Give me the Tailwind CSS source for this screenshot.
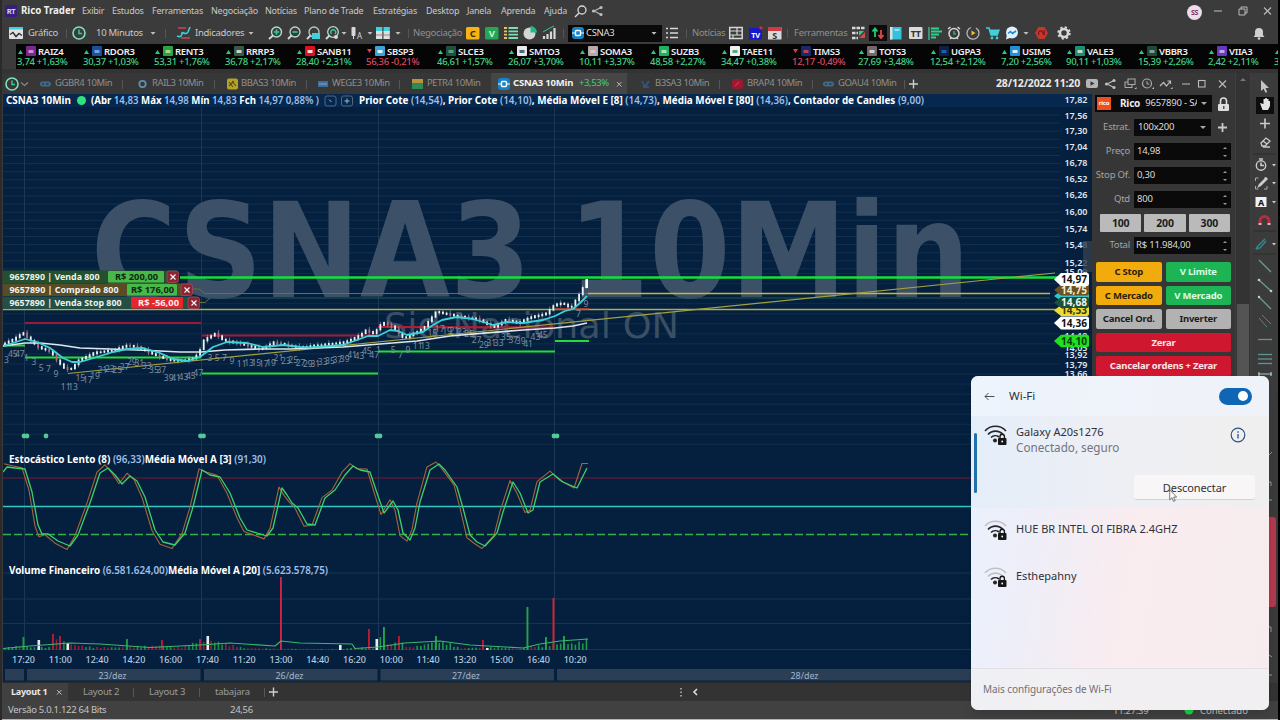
<!DOCTYPE html>
<html lang="pt-BR">

<head>
    <meta charset="UTF-8">
    <meta name="viewport" content="width=device-width, initial-scale=1.0">
    <title>Rico Trader</title>
    <script src="https://cdn.jsdelivr.net/npm/@tailwindcss/browser@4"></script>
</head>

<body class="bg-[#3b3b3b] w-[1280px] h-[720px] overflow-hidden relative font-['Noto_Sans','Open_Sans',sans-serif] text-[#c9c9c9]">
    <div class="flex flex-col h-[720px] border-l-2 border-r-2 border-r-black border-l-[#2a2a2a]">
        <!-- Menu -->
        <nav id="menu" class="flex h-[22px] shrink-0 text-[9px] tracking-[-0.25px]"></nav>

        <!-- Toolbar -->
        <div id="toolbar" class="flex h-[22px] shrink-0 text-[9.5px] tracking-[-0.3px]"></div>

        <!-- Ticker -->
        <div class="h-[25px] shrink-0 bg-[#050505] ml-[14px] overflow-hidden">
            <div id="ticker" class="flex h-full"></div>
        </div>

        <div class="flex h-[614px] shrink-0 border-t-4 border-[#333333]">
            <div class="flex flex-col w-[1233px] shrink-0">
                <!-- Chart tabs -->
                <div id="tabs" class="flex h-[21px] shrink-0 text-[9.5px] tracking-[-0.4px] text-[#8f8f8f] bg-[#373737]"></div>

                <div class="flex h-[589px] shrink-0">
                    <svg id="chart" class="ml-px shrink-0" width="1089" height="589" viewBox="3 94 1089 589"></svg>

                    <!-- Boleta -->
                    <div class="w-[143px] bg-[#363636] pl-[3px] pr-[4px] pt-px text-[9.5px] tracking-[-0.2px]">
                        <div class="flex items-center h-[17px]">
                            <div class="flex items-center w-[117px] h-[17px] bg-[#0a0a0a] px-[2px]">
                                <span class="w-[14px] h-[13px] bg-[#f04e1e] text-white text-[6px] font-bold leading-[13px] text-center">rico</span>
                                <b class="ml-[9px] text-[10px] text-[#eee]">Rico</b>
                                <span class="ml-[5px] w-[52px] overflow-hidden whitespace-nowrap text-[#ddd]">9657890 - SA</span>
                                <span class="ml-auto mr-[3px] border-x-3 border-x-transparent border-t-3 border-t-[#aaa]"></span>
                            </div>
                            <svg class="ml-[5px]" width="14" height="14" viewBox="0 0 14 14"><path d="M3.5 7V4a3 3 0 0 1 6 0v3" fill="none" stroke="#ddd" stroke-width="1.6" /><rect x="1" y="7" width="11" height="7" rx="1" fill="#ddd" /><rect x="6" y="9" width="1.5" height="3" fill="#555" /></svg>
                        </div>
                        <div class="flex items-center h-[17px] mt-[7px]">
                            <span class="w-[35px] mr-[4px] text-right text-[#a5a5a5]">Estrat.</span>
                            <span class="flex items-center w-[77px] h-[17px] bg-[#0a0a0a] pl-[4px] pr-[5px] text-[#ddd]">100x200<span class="ml-auto border-x-3 border-x-transparent border-t-3 border-t-[#aaa]"></span></span>
                            <svg class="ml-[7px]" width="9" height="9" viewBox="0 0 9 9"><path d="M0 4.5h9M4.5 0v9" stroke="#c8c8c8" stroke-width="1.8" /></svg>
                        </div>
                        <div id="fields"></div>
                        <div class="grid grid-cols-3 gap-[3px] w-[130px] h-[18px] mt-[6px] ml-[5px] text-[10.5px] font-bold text-[#1c1c1c] text-center leading-[18px]">
                            <span class="bg-[#bababa] rounded-[1px]">100</span><span class="bg-[#bababa] rounded-[1px]">200</span><span class="bg-[#bababa] rounded-[1px]">300</span>
                        </div>
                        <div class="flex items-center h-[17px] mt-[5px]">
                            <span class="w-[35px] mr-[4px] text-right text-[#a5a5a5]">Total</span>
                            <span class="flex items-center w-[97px] h-[17px] bg-[#0a0a0a] pl-[2px] pr-[3px] text-[#ddd]">R$ 11.984,00<svg class="ml-auto" width="6" height="12" viewBox="0 0 6 12"><path d="M1 3l2-2 2 2zM1 9l2 2 2-2z" fill="#999" /></svg></span>
                        </div>
                        <div class="grid grid-cols-2 gap-x-[4px] gap-y-[4px] w-[135px] mt-[8px] ml-px text-[9.5px] font-bold text-center leading-[19px]">
                            <span class="h-[19.5px] bg-[#f2ab0c] text-[#2b2108] rounded-[2px]">C Stop</span>
                            <span class="h-[19.5px] bg-[#1db455] text-[#d9ffe4] rounded-[2px]">V Limite</span>
                            <span class="h-[19.5px] bg-[#f2ab0c] text-[#2b2108] rounded-[2px]">C Mercado</span>
                            <span class="h-[19.5px] bg-[#1db455] text-[#d9ffe4] rounded-[2px]">V Mercado</span>
                            <span class="h-[19.5px] bg-[#b2b2b2] text-[#1c1c1c] rounded-[2px]">Cancel Ord.</span>
                            <span class="h-[19.5px] bg-[#b2b2b2] text-[#1c1c1c] rounded-[2px]">Inverter</span>
                            <span class="h-[19.5px] col-span-2 bg-[#cf1830] text-[#ffe5e8] rounded-[2px]">Zerar</span>
                            <span class="h-[19.5px] col-span-2 bg-[#cf1830] text-[#ffe5e8] rounded-[2px]">Cancelar ordens + Zerar</span>
                        </div>
                    </div>
                </div>
            </div>
            <!-- Scroll + tools -->
            <div class="w-[16px] shrink-0 bg-[#333] border-x border-[#3f3f3f] flex flex-col items-center">
                <span class="mt-[5px] border-x-3 border-x-transparent border-b-3 border-b-[#777]"></span>
                <div class="mt-[223px] w-[12px] h-[340px] bg-[#545454]"></div>
            </div>
            <svg id="tools" class="shrink-0" width="27" height="610" viewBox="1251 73 27 610"></svg>
        </div>

        <!-- Layout tabs -->
        <div id="layouts" class="flex h-[18px] shrink-0 bg-[#333333] text-[9.5px] tracking-[-0.25px] text-[#9c9c9c]"></div>
        <!-- Status -->
        <div id="status" class="flex h-[18px] shrink-0 bg-[#414141] text-[9.5px] tracking-[-0.3px] text-[#c4c4c4]"></div>
        <div class="h-px shrink-0 bg-[#b5b5b5]"></div>
    </div>

    <!-- Wi-Fi flyout -->
    <div class="absolute left-[971px] top-[376px] w-[298px] h-[334px] rounded-[7px] overflow-hidden flex flex-col text-[#303036] text-[11px] shadow-lg bg-linear-[100deg,#e9f3ff_0%,#eeeef8_25%,#faecef_55%,#f6ecee_100%]">
        <div class="flex items-center h-[40px] px-[13px] bg-[#eef4fb]/80">
            <svg width="11" height="9" viewBox="0 0 11 9"><path d="M10.5 4.5H1M4.5 1L1 4.5L4.5 8" fill="none" stroke="#4c4c52" stroke-width="1" /></svg>
            <span class="ml-[14px] text-[11.5px]">Wi-Fi</span>
            <span class="ml-auto mr-[4px] w-[33px] h-[17px] rounded-full bg-[#0f66b4] flex items-center justify-end pr-[4px]"><span class="w-[10px] h-[10px] rounded-full bg-white"></span></span>
        </div>
        <div class="h-[92px] relative bg-linear-to-r from-[#e4eefa] via-[#eeeff4] to-[#f0efef]">
            <span class="absolute left-[3px] top-[17px] w-[3px] h-[60px] rounded-full bg-[#2270aa]"></span>
            <div class="flex h-[39px] pl-[13px] pt-[8px]">
                <svg class="wifi" data-bars="3" width="24" height="22" viewBox="0 0 24 22"></svg>
                <div class="ml-[8px]">
                    <div class="leading-[15px] text-[11px]">Galaxy A20s1276</div>
                    <div class="leading-[17px] text-[11.7px] text-[#74747c]">Conectado, seguro</div>
                </div>
                <svg class="ml-auto mr-[23px] mt-[3px]" width="16" height="16" viewBox="0 0 16 16"><circle cx="8" cy="8" r="6.8" fill="none" stroke="#2f5183" stroke-width="1.2" /><path d="M8 7v4.5M8 4.3v1.4" stroke="#2f5183" stroke-width="1.3" /></svg>
            </div>
            <div class="ml-[163px] mt-[20px] w-[121px] h-[25px] rounded-[3px] bg-[#f9f6f7] border-b border-[#d5d0d2] text-center leading-[25px] text-[11px] tracking-[-0.1px]">Desconectar</div>
            <svg class="absolute left-[198px] top-[73px]" width="9" height="14" viewBox="0 0 9 14"><path d="M.7.7v10l2.3-2 1.5 3.6 1.7-.7-1.6-3.5h3z" fill="#fff" stroke="#555" stroke-width=".8" /></svg>
        </div>
        <div class="flex items-center h-[43px] pl-[13px]">
            <svg class="wifi" data-bars="2" width="24" height="22" viewBox="0 0 24 22"></svg>
            <span class="ml-[8px] text-[11px]">HUE BR INTEL OI FIBRA 2.4GHZ</span>
        </div>
        <div class="flex items-center h-[51px] pl-[13px]">
            <svg class="wifi" data-bars="1" width="24" height="22" viewBox="0 0 24 22"></svg>
            <span class="ml-[8px] text-[11px]">Esthepahny</span>
        </div>
        <div class="mt-auto h-[42px] flex items-center pl-[12px] border-t border-[#e2e0e6] bg-[#f0f0f3]/80 text-[10px] tracking-[-0.08px] text-[#707078]">Mais configurações de Wi-Fi</div>
    </div>

    <script>
        // ---------- icons (14x14) ----------
        const G = '#2fd08c', W = '#d8d8d8', C = '#3fd0dc';
        const icons = {
            rt: `<rect width="12" height="12" x="1" y="1" fill="#32207c"/><text x="7" y="10" font-size="7.5" font-weight="bold" text-anchor="middle" fill="#d9cff5">RT</text>`,
            search: `<circle cx="8" cy="6" r="4" fill="none" stroke="${W}" stroke-width="1.3"/><path d="M5 9l-4 4" stroke="${W}" stroke-width="1.5"/>`,
            share: `<path d="M11 3.5L4 7l7 3.5" fill="none" stroke="#bdbdbd" stroke-width="1.1"/><circle cx="11" cy="3.5" r="1.6" fill="#bdbdbd"/><circle cx="3.5" cy="7" r="1.6" fill="#bdbdbd"/><circle cx="11" cy="10.500" r="1.6" fill="#bdbdbd"/>`,
            chart: `<rect y="1" width="14" height="12" rx="1" fill="#e2e2e2"/><rect y="1" width="14" height="2.5" fill="${C}"/><path d="M1 8.500l3-2 3 4 3-3 3 2" fill="none" stroke="#333" stroke-width="1.5"/>`,
            clock: `<circle cx="7" cy="7" r="6" fill="none" stroke="#7fe0bc" stroke-width="1.6"/><path d="M7 3.5V7.5H10" fill="none" stroke="${G}" stroke-width="1.5"/>`,
            caret: `<path d="M3.5 6h5L6 8.8z" fill="#c0c0c0"/>`,
            ind: `<path d="M1 2h8M4 12h9" stroke="#c94a4a" stroke-width="1.5"/><path d="M0 10c4 2 5-1 5-3s4 3 6-1l2-5" fill="none" stroke="${C}" stroke-width="1.6"/>`,
            zin: `<circle cx="8.5" cy="6" r="5" fill="none" stroke="#b9d9d0" stroke-width="1.4"/><path d="M5 9.5L1 13" stroke="${W}" stroke-width="1.8"/><path d="M5.8 6h5.4M8.5 3.3v5.4" stroke="${G}" stroke-width="1.6"/>`,
            zout: `<circle cx="8" cy="6" r="5" fill="none" stroke="#b9d9d0" stroke-width="1.3"/><path d="M4.5 9.5L1 13" stroke="${W}" stroke-width="1.8"/><path d="M5.5 6h5" stroke="${G}" stroke-width="1.6"/>`,
            zsel: `<circle cx="8" cy="6" r="5" fill="none" stroke="#b9c9c9" stroke-width="1.3"/><path d="M4.5 9.5L1 13" stroke="${W}" stroke-width="1.8"/><rect x="6" y="7" width="8" height="6" fill="${C}"/>`,
            zper: `<circle cx="8" cy="6" r="5.3" fill="none" stroke="#b9d9d0" stroke-width="1.3"/><path d="M4.5 9.5L1 13" stroke="${W}" stroke-width="1.8"/><path d="M6.500 8a2.500 2.500 0 1 1 3.500 0" fill="none" stroke="${G}" stroke-width="1.4"/><circle cx="11" cy="11" r="2" fill="${W}"/>`,
            ta: `<rect x="1.5" y="1" width="4" height="9" rx="1" fill="${W}"/><path d="M3.5 10v3" stroke="${W}"/><text x="7" y="13" font-size="8" fill="${W}">A</text>`,
            grid: `<rect y="1" width="6.3" height="5" fill="${C}"/><rect x="7.5" y="1" width="6.3" height="5" fill="${C}"/><rect y="5" width="6.3" height="8" fill="#dedede"/><rect x="7.5" y="5" width="6.3" height="8" fill="#dedede"/><path d="M0 9h14" stroke="#777" stroke-width=".8"/>`,
            c: `<rect y="1" width="13.5" height="12.5" rx="1.5" fill="#f5b414"/><text x="6.7" y="11" font-size="9.5" font-weight="bold" text-anchor="middle" fill="#40300a">C</text>`,
            v: `<rect y="1" width="13.5" height="12.5" rx="1.5" fill="#22a855"/><text x="6.7" y="11" font-size="9.5" font-weight="bold" text-anchor="middle" fill="#c4f5d4">V</text>`,
            rows: `<path d="M0 2h3M0 5.3h3M0 8.6h3M0 12h3" stroke="#e0c860" stroke-width="1.8"/><path d="M4.5 2H14M4.5 5.3H14M4.5 8.6H14M4.5 12H14" stroke="#7fdcb0" stroke-width="1.8"/>`,
            pie: `<circle cx="6.5" cy="7.5" r="6" fill="#d5d5d5"/><path d="M7.5 6.5V0a6.5 6.5 0 0 1 6.5 6.5z" fill="#22b88c"/>`,
            bars: `<path d="M2 13V10M5.5 13V8M9 13V5.5M12.5 13V2" stroke="${W}" stroke-width="2.2"/><path d="M1 6l5-3 6-3" stroke="${G}" fill="none"/>`,
            csna: `<rect y="1" width="12" height="12" rx="3" fill="#1583c7"/><rect x="3.5" y="4.5" width="5" height="5" rx="1" fill="none" stroke="#fff" stroke-width="1.4"/><path d="M0 7h3.5M8.5 7H12" stroke="#fff"/>`,
            list: `<path d="M1 2.5h2M1 7h2M1 11.5h2M5 2.5h8M5 7h8M5 11.5h8" stroke="${W}" stroke-width="1.6"/>`,
            news: `<rect x=".7" y="1.5" width="12.5" height="11" fill="none" stroke="${W}" stroke-width="1.5"/><path d="M1 5h12M1 9h12M8 1v8M4 9v3" stroke="${W}" stroke-width="1.2"/>`,
            tv: `<rect y="2" width="13" height="11.5" fill="#1818c8"/><text x="6.5" y="11.5" font-size="7.5" font-weight="bold" text-anchor="middle" fill="#fff">TV</text><circle cx="12" cy="2" r="1.7" fill="#d02c34"/>`,
            usd: `<rect y="1" width="13.5" height="12.5" fill="#d8d8d8"/><rect y="1" width="13.5" height="4" fill="#cf3a44"/><text x="6.7" y="12.5" font-size="9" font-weight="bold" text-anchor="middle" fill="#333">S</text>`,
            table: `<path d="M0 2h13M0 7h6M0 12h6" stroke="${W}" stroke-width="2.6" stroke-dasharray="3.5 1"/><path d="M7 12l6-6v6z" fill="#d44"/><path d="M7 5h5l-5 5z" fill="${G}"/>`,
            updn: `<rect x="-2" y="-1" width="18" height="16" fill="#0c0c0c"/><path d="M4 11V3M1.5 5.5L4 2.5l2.5 3" fill="none" stroke="#25cc70" stroke-width="1.8"/><path d="M10 4v8M7.5 9l2.5 3 2.5-3" fill="none" stroke="#e04848" stroke-width="1.8"/>`,
            book: `<rect x="1" y="1" width="11.5" height="12.5" fill="#32c2dc"/><rect x="1" y="1" width="2.5" height="12.5" fill="#e0e0e0"/><path d="M5.5 4h5" stroke="#fff"/>`,
            tt: `<rect y="1" width="13.5" height="12" rx="1" fill="#dadada"/><text x="6.7" y="11" font-size="9" font-weight="bold" text-anchor="middle" fill="#333">TT</text>`,
            prof: `<path d="M1 1v13" stroke="${G}" stroke-width="1.3"/><path d="M3 2.5h8M3 5.5h11M3 8.5h8M3 11.5h5" stroke="${G}" stroke-width="1.9"/>`,
            alarm: `<circle cx="7" cy="7.5" r="5" fill="none" stroke="${W}" stroke-width="1.5"/><path d="M7 5v3h2" stroke="${G}" fill="none" stroke-width="1.2"/><path d="M1 3l2.5-2M13 3l-2.5-2M3 13l1.5-1.5M11 13l-1.5-1.5" stroke="${W}" stroke-width="1.5"/>`,
            replay: `<path d="M5 1.5A6 6 0 1 0 10 2" fill="none" stroke="#b8b8b8" stroke-width="1.3"/><path d="M5.5 4.5v5l4-2.5z" fill="#f0bd35"/>`,
            cart: `<path d="M0 2h3l2 7h7" fill="none" stroke="${C}" stroke-width="1.5"/><path d="M3 3.5h11l-2 5.5H5z" fill="${C}"/><circle cx="6" cy="12" r="1.4" fill="${C}"/><circle cx="11" cy="12" r="1.4" fill="${C}"/>`,
            chat: `<circle cx="7" cy="6.5" r="6" fill="#dff0fa"/><path d="M1 13.5l1-5 4 3z" fill="#dff0fa"/><path d="M3 7.5l2.5-2 2 2 3.500-2.5" fill="none" stroke="#1d88d0" stroke-width="1.6"/>`,
            hex: `<path d="M4.5 1h6L14 7l-3.5 6h-6L1 7z" fill="#c9352c"/><path d="M5 9c-2-4 3-6 4-2s2 0 1-3" fill="none" stroke="#7a1c18" stroke-width="1.3"/>`,
            gear: `<circle cx="7" cy="7" r="4" fill="none" stroke="${W}" stroke-width="2.5"/><circle cx="7" cy="7" r="5.7" fill="none" stroke="${W}" stroke-width="2" stroke-dasharray="2.24 2.24"/>`,
            bell: `<path d="M1.5 11h11c-2-1.5-1.5-3-1.5-5a4 4 0 0 0-8 0c0 2 .5 3.5-1.5 5z" fill="#cfcfcf"/><circle cx="7" cy="12.5" r="1.3" fill="#cfcfcf"/>`,
            cam: `<rect x="1" y="2" width="12" height="9" rx="2" fill="#b5b5b5"/><path d="M5.5 4.2v4.5l4-2.2z" fill="#333"/>`,
            wins: `<path d="M4 7.500V2h7v5.500zM1 10.500V5h3M1 10.500h7V8" fill="none" stroke="#aaa" stroke-width="1.1"/><path d="M10.500 12h2v-2z" fill="#ccc"/>`,
            clk2: `<circle cx="6" cy="6.5" r="4.500" fill="none" stroke="#aaa" stroke-width="1.2"/><path d="M6 4v3h2.2" fill="none" stroke="#aaa"/><path d="M11 12h2v-2z" fill="#ccc"/>`,
            zig: `<path d="M0 9l3.500-3.500 3 3.500 4-5M7.500 4h3v3" fill="none" stroke="#bbb" stroke-width="1.2"/><path d="M10.500 12h2v-2z" fill="#ccc"/>`,
            min: `<path d="M1 7h8" stroke="#aaa" stroke-width="1.2"/>`,
            rest: `<path d="M1 5h6v6H1zM3 5V3h6v6H7" fill="none" stroke="#bbb"/>`,
            max: `<rect x="1.500" y="3.500" width="6.500" height="6.500" fill="none" stroke="#bbb" stroke-width="1.1"/>`,
            x: `<path d="M1 3.5l7 7M8 3.5l-7 7" stroke="#bbb" stroke-width="1.1"/>`,
            xs: `<path d="M1 5l4.5 4.5M5.5 5L1 9.5" stroke="#bbb"/>`,
            chev: `<path d="M1 5.5l3.5 3 3.5-3" fill="none" stroke="#888" stroke-width="1.2"/>`,
            plus: `<path d="M0 7h9M4.5 2.5v9" stroke="#cfcfcf" stroke-width="1.4"/>`,
            ger: `<rect y="4.5" width="11" height="5" rx="2.5" fill="#3f6a8a"/><path d="M2 7h2M6 7h2.5" stroke="#222"/>`,
            ring: `<circle cx="4.5" cy="7" r="3.2" fill="none" stroke="#5e8eb0" stroke-width="1.8"/>`,
            bb: `<rect y="1.5" width="11" height="11" rx="2" fill="#b5a428"/><path d="M2 5l4 5M5 4l4 5M2 9l5-5" stroke="#56501a" stroke-width="1.2"/>`,
            weg: `<rect y="4" width="10" height="6" fill="#3a6fa0"/><path d="M1 7h8" stroke="#88a8c4"/>`,
            pet: `<rect y="2" width="11" height="4.5" fill="#b89440"/><rect y="6.5" width="11" height="5.5" fill="#2f8a58"/>`,
            b3: `<path d="M1 4l3 6M4 10l4-6M2 10h6" stroke="#35578a" stroke-width="1.6"/>`,
            brap: `<rect y="2" width="11" height="10" rx="3" fill="#9c1830"/><path d="M3 9l4-4" stroke="#c83048" stroke-width="1.5"/>`,
            sep: `<path d="M.5 3v9" stroke="#565656"/>`,
            dots: `<path d="M2 3v1.5M2 6.5V8M2 10v1.5" stroke="#bbb" stroke-width="1.5"/>`,
            back: `<path d="M6 4L3 7l3 3" fill="none" stroke="#ddd" stroke-width="1.6"/>`,
            on: `<circle cx="5" cy="7" r="4.5" fill="#18d848"/>`
        };
        const ico = n => `<svg class="shrink-0 overflow-visible" width="14" height="14" viewBox="0 0 14 14">${icons[n]}</svg>`;

        // items are [x, html]; every cell runs up to the next item's x
        function row(id, items, start) {
            const el = document.getElementById(id);
            let html = `<div class="shrink-0" style="width:${items[0][0] - start}px"></div>`;
            items.forEach(([x, body, cls], i) => {
                const next = items[i + 1] ? items[i + 1][0] : 1278;
                html += `<div class="flex items-center shrink-0 whitespace-nowrap ${cls || ''}" style="width:${next - x}px">${icons[body] ? ico(body) : body}</div>`;
            });
            el.innerHTML = html;
        }

        row('menu', [[4, 'rt'], [21, '<b class="text-[#eee] text-[9.7px] tracking-normal">Rico Trader</b>'], [82, 'Exibir'], [112, 'Estudos'], [152, 'Ferramentas'], [211, 'Negociação'], [265, 'Notícias'],
        [304, 'Plano de Trade'], [373, 'Estratégias'], [426, 'Desktop'], [467, 'Janela'], [501, 'Aprenda'], [544, 'Ajuda'], [574, 'search'], [590, 'share'],
        [1187, '<span class="w-[15px] h-[15px] mt-[3px] rounded-full bg-[#ecdcec] text-[#7a3060] text-[7px] font-bold leading-[15px] text-center">SS</span>'],
        [1213, 'min'], [1238, 'rest'], [1263, 'x']], 2);

        row('toolbar', [[9, 'chart'], [28, 'Gráfico'], [66, 'sep'], [72, 'clock'], [96, '10 Minutos'], [147, 'caret'], [165, 'sep'], [177, 'ind'], [195, 'Indicadores'], [245, 'caret'],
        [268, 'zin'], [287, 'zout'], [306, 'zsel'], [325, 'zper'], [338, 'caret'], [350, 'ta'], [364, 'caret'], [376, 'grid'], [392, 'caret'], [408, 'sep'],
        [413, '<span class="text-[#8f8f8f]">Negociação</span>'], [466, 'c'], [485, 'v'], [504, 'rows'], [523, 'pie'], [542, 'bars'], [563, 'sep'],
        [568, `<span class="flex items-center w-[94px] h-[17px] bg-[#0a0a0a] pl-[4px] text-[#ddd]">${ico('csna')}<span class="w-[63px]">CSNA3</span>${ico('caret')}</span>`],
        [665, 'list'], [686, 'sep'], [692, '<span class="text-[#8f8f8f]">Notícias</span>'], [729, 'news'], [749, 'tv'], [768, 'usd'], [787, 'sep'],
        [794, '<span class="text-[#8f8f8f]">Ferramentas</span>'], [852, 'table'], [871, 'updn'], [889, 'book'], [909, 'tt'], [928, 'prof'], [947, 'alarm'], [966, 'replay'],
        [986, 'cart'], [1005, 'chat'], [1020, 'caret'], [1034, 'hex'], [1057, 'gear'], [1252, 'bell']], 2);

        // x, code, last, change, logo colour, inner mark colour
        const quotes = [[17, 'RAIZ4', '3,74', '+1,63%', '#7d2590', '#d8a0e0'], [83, 'RDOR3', '30,37', '+1,03%', '#1c4f98', '#7fb0e8'], [154, 'RENT3', '53,31', '+1,76%', '#30a040', '#a8e89a'],
        [225, 'RRRP3', '36,78', '+2,17%', '#385848', '#dce8e0'], [296, 'SANB11', '28,40', '+2,31%', '#e01020', '#ffffff'], [366, 'SBSP3', '56,36', '-0,21%', '#38a4d8', '#ffffff'],
        [437, 'SLCE3', '46,61', '+1,57%', '#205040', '#58b088'], [508, 'SMTO3', '26,07', '+3,70%', '#e8e8e8', '#305070'], [579, 'SOMA3', '10,11', '+3,37%', '#b8a8a8', '#d8cccc'],
        [650, 'SUZB3', '48,58', '+2,27%', '#20b060', '#b8f0c8'], [721, 'TAEE11', '34,47', '+0,38%', '#f0f0f0', '#38a070'], [792, 'TIMS3', '12,17', '-0,49%', '#182868', '#d04858'],
        [858, 'TOTS3', '27,69', '+3,48%', '#70686c', '#e8e0e0'], [930, 'UGPA3', '12,54', '+2,12%', '#0c2048', '#2868b8'], [1001, 'USIM5', '7,20', '+2,56%', '#2090d8', '#ffffff'],
        [1066, 'VALE3', '90,11', '+1,03%', '#189080', '#e8e8b0'], [1138, 'VBBR3', '15,39', '+2,26%', '#204838', '#90b0a0'], [1208, 'VIIA3', '2,42', '+2,11%', '#6838c0', '#d0b8f0'], [1274, '', '3', '', '#000', '#000']];
        row('ticker', quotes.map(([x, code, last, chg, bg, fg]) => {
            const up = chg[0] !== '-';
            return [x, `<div class="leading-[11px] pt-px self-start ${up ? 'text-[#42d084]' : 'text-[#dd4860]'}">
                <div class="flex items-center h-[12px]"><svg class="ml-px mr-px" width="19" height="12" viewBox="0 0 19 12"><path d="${up ? 'M0 9h5l-2.5-4z' : 'M0 4h5l-2.5 4z'}" fill="${up ? '#30c878' : '#d84058'}"/><rect x="8" y="1" width="10" height="10" rx="1" fill="${bg}"/><path d="M10.5 6.5h5" stroke="${fg}" stroke-width="3" fill="none" opacity=".85"/></svg><b class="text-[9.5px] font-semibold tracking-[-0.3px] text-[#f0f0f0]">${code}</b></div>
                <div class="text-[9.5px] font-medium leading-[10px] tracking-[-0.3px]">${last} ${chg}</div></div>`, 'overflow-hidden'];
        }), 16);

        row('tabs', [[5, 'clock'], [20, 'chev'], [40, 'ger'], [55, 'GGBR4 10Min'], [122, 'sep'], [138, 'ring'], [152, 'RAIL3 10Min'], [214, 'sep'], [227, 'bb'], [241, 'BBAS3 10Min'], [306, 'sep'], [318, 'weg'], [332, 'WEGE3 10Min'],
        [399, 'sep'], [412, 'pet'], [427, 'PETR4 10Min'], [491, '', 'bg-[#464646]'], [498, 'csna', 'bg-[#464646]'], [513, '<b class="text-[#f2f2f2] tracking-[-0.2px]">CSNA3 10Min</b>', 'bg-[#464646]'], [579, '<span class="text-[#48c878]">+3,53%</span>', 'bg-[#464646]'], [616, 'xs', 'bg-[#464646]'],
        [627, ''], [641, 'b3'], [655, 'B3SA3 10Min'], [719, 'sep'], [732, 'brap'], [747, 'BRAP4 10Min'], [812, 'sep'], [823, 'ger'], [838, 'GOAU4 10Min'], [904, 'sep'], [909, 'plus'],
        [996, '<b class="text-[#e8e8e8] text-[10.5px] tracking-[-0.15px]">28/12/2022 11:20</b>'], [1085, 'cam'], [1103, 'share'], [1124, 'wins'], [1141, 'clk2'], [1160, 'zig'], [1181, 'min'], [1197, 'max'], [1218, 'x', 'overflow-hidden']], 2);

        row('layouts', [[2, '', 'bg-[#404040]'], [11, '<b class="text-[#e8e8e8] text-[9px]">Layout 1</b>', 'bg-[#404040]'], [56, 'xs', 'bg-[#404040]'], [68, ''], [83, 'Layout 2'], [133, 'sep'], [149, 'Layout 3'], [199, 'sep'], [215, 'tabajara'], [264, 'sep'], [269, 'plus'], [679, 'dots'], [691, 'back']], 2);
        row('status', [[8, 'Versão 5.0.1.122 64 Bits'], [230, '24,56'], [1113, '<span class="mt-[3px]">11:27:39</span>'], [1184, 'on'], [1200, '<span class="mt-[3px] tracking-normal">Conectado</span>']], 2);

        document.getElementById('fields').innerHTML = [['Preço', '14,98'], ['Stop Of.', '0,30'], ['Qtd', '800']].map(([k, v]) =>
            `<div class="flex items-center h-[17px] mt-[7px]"><span class="w-[35px] mr-[4px] flex justify-end text-[#a5a5a5] whitespace-nowrap">${k}</span>
            <span class="flex items-center w-[97px] h-[17px] bg-[#0a0a0a] px-[3px] text-[#ddd]">${v}<svg class="ml-auto" width="6" height="12" viewBox="0 0 6 12"><path d="M1 3l2-2 2 2zM1 9l2 2 2-2z" fill="#999"/></svg></span></div>`).join('');

        // Wi-Fi signal: inactive arcs are greyed out
        document.querySelectorAll('.wifi').forEach(el => {
            const n = +el.dataset.bars, k = i => n >= i ? '#26262a' : '#c3bfc6';
            el.innerHTML = `<g fill="none" stroke-width="1.6"><path d="M1 7A14 14 0 0 1 22 7" stroke="${k(3)}"/><path d="M4 10.5A10 10 0 0 1 19 10.5" stroke="${k(2)}"/><path d="M7 13.5A6 6 0 0 1 15 13" stroke="${k(1)}"/></g>
            <circle cx="11" cy="16.5" r="2" fill="#26262a"/><rect x="14" y="14" width="8.5" height="7" rx="1" fill="#17171a"/><path d="M16 14v-1.5a2.2 2.2 0 0 1 4.4 0V14" fill="none" stroke="#17171a" stroke-width="1.4"/><circle cx="18.2" cy="17.5" r=".9" fill="#fff"/>`;
        });

        // ---------- chart ----------
        let s = '';
        const line = (x1, y1, x2, y2, c, w = 1, extra = '') => s += `<line x1="${x1}" y1="${y1}" x2="${x2}" y2="${y2}" stroke="${c}" stroke-width="${w}" ${extra}/>`;
        const rect = (x, y, w, h, c, extra = '') => s += `<rect x="${x}" y="${y}" width="${w}" height="${h}" fill="${c}" ${extra}/>`;
        const text = (x, y, t, w, size, c, extra = '') => s += `<text x="${x}" y="${y}" font-size="${size}" fill="${c}" ${w ? `textLength="${w}" lengthAdjust="spacingAndGlyphs"` : ''} ${extra}>${t}</text>`;
        const poly = (pts, c, w, extra = '') => s += `<polyline points="${pts.map(p => p.join()).join(' ')}" fill="none" stroke="${c}" stroke-width="${w}" stroke-linejoin="round" ${extra}/>`;
        const v = t => `<tspan font-weight="600" fill="#9dbfe8">${t}</tspan>`;
        const B = 'font-weight="bold"';

        rect(3, 94, 1089, 589, '#04203e');
        rect(3, 94, 1089, 13, '#06284e');
        for (let y = 115; y < 270; y += 8.1) line(3, y, 1060, y, '#12304f', 1);
        for (let y = 273.5; y < 450; y += 10.05) line(3, y, 1060, y, '#112d4a', 1);
        [573, 599, 623.5, 649.5].forEach(y => line(3, y, 1092, y, '#18344f'));
        [24.5, 201.5, 378.5, 554.5].forEach(x => line(x, 107, x, 650, '#1a3753'));

        text(91, 297, 'CSNA3', 440, 131, '#3c5168', B + ' font-family="DejaVu Sans"');
        text(568, 297, '10Min', 402, 131, '#3c5168', B + ' font-family="DejaVu Sans"');
        text(384, 337.5, 'Sid Nacional ON', 295, 35, '#3a4f64', 'font-family="DejaVu Sans"');

        text(6, 104, 'CSNA3 10Min', 65, 10, '#fff', B);
        s += '<circle cx="81.5" cy="100.5" r="4.5" fill="#2fe27c"/>';
        text(91, 104, `(Abr ${v('14,83')} Máx ${v('14,98')} Mín ${v('14,83')} Fch ${v('14,97 0,88% )')}`, 228, 10, '#fff', B);
        s += '<g fill="none" stroke="#56677e"><rect x="325" y="96" width="11" height="10" rx="2"/><rect x="341.5" y="96" width="11" height="10" rx="2"/><path d="M329 99.5l2.500 2.500M344.5 101h5M347 98.5v5" stroke="#a8b4c4"/></g>';
        text(359, 104, `Prior Cote ${v('(14,54)')}, Prior Cote ${v('(14,10)')}, Média Móvel E [8] ${v('(14,73)')}, Média Móvel E [80] ${v('(14,36)')}, Contador de Candles ${v('(9,00)')}`, 565, 10, '#fff', B);

        // support / resistance levels
        line(3, 309.5, 1058, 309.5, '#b0ac48', 1.3);
        line(205, 293.5, 1050, 293.5, '#6b7040', 1);
        line(588, 293.5, 1050, 293.5, '#c9b53c', 1.6);
        line(205, 298, 1050, 298, '#1f5a55', 1.2);
        line(180, 277.5, 1060, 277.5, '#14df3c', 2.6);
        line(25, 323, 201, 323, '#a01838', 2);
        line(202, 335.5, 378, 335.5, '#a81838', 2);
        line(378, 327, 555, 327.5, '#b81c30', 2.2);
        line(555, 309, 589, 309, '#d04028', 1.4);
        [[3, 25, 345.5], [25, 201, 357.5], [202, 378, 373.5], [378, 555, 351.5], [555, 589, 341]].forEach(([a, b, y]) => line(a, y, b, y, '#22dd38', 2));
        line(68, 373.5, 1055, 273, '#a39f42', 1.2);

        // candle counter
        const counts = [
            [27, [358, 362, 368, 369, 374, 387, 387, 378, 380, 376, 370, 369, 370, 367, 362, 363, 366, 370, 370, 378, 378, 377, 376, 373]],
            [203, [0, 358, 358, 358, 361, 364, 363, 363, 364, 363, 358, 361, 360, 363, 364, 364, 362, 361, 360, 359, 355, 356, 351, 355]],
            [379, [350, 0, 350, 355, 350, 346, 346, 333, 329, 331, 331, 332, 334, 340, 345, 343, 343, 337, 340, 341, 344, 337, 335]],
            [557, [0, 0, 0, 314, 304]]];
        counts.forEach(([x, ys]) => ys.forEach((y, i) => y && text((x + i * 7.36 - 3).toFixed(1), y + 3, i * 2 + 1, 0, 8.5, '#7f8d9e')));
        text(4, 363, '3', 0, 8.5, '#7f8d9e'); text(8, 357, '45', 0, 8.5, '#7f8d9e'); text(15, 357, '47', 0, 8.5, '#7f8d9e');

        // candles
        const price = [[3, 344], [15, 339], [24, 332], [30, 338], [40, 347], [52, 351], [60, 362], [66, 368], [72, 369], [80, 360], [90, 355], [97, 352], [115, 350], [128, 345], [140, 347], [160, 356], [173, 360], [185, 360], [195, 358], [201, 351],
        [204, 341], [211, 336], [217, 333], [225, 340], [245, 344], [262, 349], [275, 342], [300, 347], [345, 342], [358, 337], [367, 330], [375, 333], [384, 322], [395, 327], [405, 338], [415, 333], [425, 328], [432, 318], [438, 311], [445, 313],
        [460, 316], [480, 319], [495, 327], [508, 319], [520, 323], [528, 318], [548, 313], [556, 304], [565, 303], [572, 308], [577, 300], [582, 292], [587, 281]];
        const at = (pts, x) => {
            let i = pts.findIndex(p => p[0] >= x);
            if (i < 1) return i ? pts.at(-1)[1] : pts[0][1];
            const [a, b] = [pts[i - 1], pts[i]];
            return a[1] + (b[1] - a[1]) * (x - a[0]) / (b[0] - a[0]);
        };
        for (let i = 0; i < 159; i++) {
            const x = 5 + i * 3.68, y0 = at(price, x - 2), y1 = at(price, x + 1.4), n = Math.sin(i * 2.3);
            const top = Math.min(y0, y1) - Math.abs(n) * .7, h = Math.abs(y1 - y0) + 1.2 + Math.abs(n);
            const c = y1 > y0 && n > .2 ? '#c8646c' : '#f0f3f6';
            line(x, top - 1.5 - n, x, top + h + 1.2 + n, '#8fa0b2', .7);
            rect(x - .9, top, 1.8, h, c);
        }
        rect(585.5, 279, 2.5, 9, '#fff');
        poly([[3, 346], [25, 343], [40, 343], [60, 345], [80, 348], [110, 349], [150, 350.5], [180, 352], [201, 352], [225, 350], [260, 349], [290, 349], [343, 347], [380, 344], [417, 341], [450, 336], [490, 332.7], [523, 330], [555, 328], [573, 326], [587, 323]], '#dfe6ee', 1.7);
        poly([[4, 346], [13, 343], [25, 339], [37, 342], [50, 348], [63, 358], [72, 362], [80, 362], [97, 357], [113, 352], [127, 349], [143, 348], [160, 353], [173, 359], [187, 361], [200, 357], [213, 347], [227, 342], [247, 343], [263, 347], [283, 345], [300, 347],
        [310, 347.5], [343, 345], [357, 340], [368, 336], [378, 336], [390, 330], [398, 331], [407, 335], [423, 332], [433, 325], [442, 320], [457, 317], [473, 319], [493, 325], [507, 322], [523, 323], [543, 320], [555, 316], [565, 311], [573, 309], [580, 303], [587, 296]], '#3cd3d8', 1.8);
        [24, 27, 46, 200.5, 203.5, 377, 380, 554, 557].forEach(x => s += `<circle cx="${x}" cy="436" r="2.4" fill="#55c898"/>`);

        // open orders
        [[271, 'Venda 800', '#24502f', 177, 90, 108, 57, '#48b84a', '#0c2a0e', 'R$ 200,00', 115, 43, 167],
        [284, 'Comprado 800', '#584c26', 190, 109, 127, 51, '#48b84a', '#0c2a0e', 'R$ 176,00', 131, 43, 181],
        [297, 'Venda Stop 800', '#244f44', 197, 112, 131, 53, '#e8242c', '#ffecec', 'R$ -56,00', 138, 41, 188]].forEach(([y, t, bg, w, tw, px, pw, pc, tc, val, vx, vw, cx]) => {
            rect(3, y - .5, w - 4, 12.5, bg);
            text(9.5, y + 9, '9657890 | ' + t, tw, 9.5, '#eef2ee', B);
            rect(px, y, pw - 1, 11.5, pc, 'rx="1"');
            text(vx, y + 9, val, vw, 9.5, tc, B);
            rect(cx, y, 11.5, 11.5, '#8c2434', 'rx="2" stroke="#c05060" stroke-width=".6"');
            s += `<path d="M${cx + 3.5} ${y + 3.5}l5 5m0 -5l-5 5" stroke="#fff" stroke-width="1.1"/>`;
        });
        s += '<path d="M193 289h6l6 4.5M200 302.500h5l5-4.5" fill="none" stroke="#6b7040"/>';

        // price axis
        [['17,82', 99], ['17,56', 115], ['17,30', 130], ['17,04', 146], ['16,78', 162], ['16,52', 178], ['16,26', 194], ['16,00', 211], ['15,74', 228], ['15,48', 244], ['15,22', 262], ['15,09', 271], ['14,18', 335], ['14,05', 347], ['13,92', 354], ['13,79', 364], ['13,66', 373]]
            .forEach(([t, y]) => text(1064.5, y + 3.5, t, 23, 9.5, '#e2e8ee', 'font-weight="600"'));
        rect(1083, 241, 9, 31, '#33404c', 'opacity=".8"');
        const tag = (y, h, bg, fg, t) => {
            s += `<path d="M1054 ${y}l7 ${-h / 2}h26q2 0 2 2v${h - 4}q0 2 -2 2h-26z" fill="${bg}"/>`;
            if (t) text(1061, y + 3.7, t, 26, 10, fg, B);
        };
        tag(296, 10, '#2fc8c8', '', '');
        tag(310.5, 11, '#f0dc30', '#3c3408', '14,53');
        tag(290, 11, '#6b5022', '#f4ead0', '14,75');
        tag(302.5, 11, '#1d5038', '#eef4ee', '14,68');
        tag(279.5, 13, '#ffffff', '#111', '14,97');
        tag(323, 13, '#ffffff', '#111', '14,36');
        tag(341, 12.5, '#22e020', '#064008', '14,10');

        // stochastic
        text(9, 462.5, `Estocástico Lento (8) ${v('(96,33)')}Média Móvel A [3] ${v('(91,30)')}`, 257, 10, '#fff', B);
        line(3, 478, 1092, 478, '#7c1834', 1.2);
        line(3, 506.5, 1092, 506.5, '#35c8c4', 1.4);
        line(3, 534.5, 1092, 534.5, '#38b048', 1.3, 'stroke-dasharray="8 3"');
        const k = [[3, 472], [7, 467], [15, 468], [25, 469], [32, 492], [38, 525], [42, 534], [48, 534], [58, 541], [70, 546], [78, 535], [90, 503], [100, 473], [108, 468], [115, 475], [122, 484], [130, 476], [137, 481], [145, 497], [155, 530], [163, 542], [175, 545], [185, 533], [193, 507], [202, 470], [210, 475], [220, 477], [230, 493], [240, 518], [247, 530], [267, 536], [273, 528], [282, 488], [287, 495], [292, 503],
        [298, 508], [307, 524], [315, 525], [325, 498], [335, 490], [345, 475], [353, 466], [360, 470], [370, 472], [377, 493], [384, 513], [393, 501], [398, 510], [403, 533], [410, 540], [415, 528], [420, 502], [430, 470], [439, 464], [445, 470], [457, 487], [463, 508], [470, 535], [477, 542], [485, 546], [497, 533], [503, 512], [513, 482], [520, 493], [528, 513], [533, 510], [540, 482], [553, 474], [563, 482], [577, 488], [587, 468]];
        poly(k.slice(1, -1).map(([x, y], i) => [x - 3, Math.max(462, 505 + (y - 505) * 1.06 + (i % 3 - 1))]).concat([[582, 463.5], [588, 463.5]]), '#a5663c', 1.1);
        poly(k, '#3fd068', 1.3);

        // volume
        text(9, 574, `Volume Financeiro ${v('(6.581.624,00)')}Média Móvel A [20] ${v('(5.623.578,75)')}`, 319, 10, '#fff', B);
        const size = [[3, 2], [20, 5], [30, 3], [50, 3], [55, 11], [62, 10], [72, 6], [95, 3], [120, 3], [160, 5], [180, 3], [197, 9], [212, 10], [230, 6], [245, 2], [320, 1], [345, 1], [352, 3], [375, 2], [380, 16], [388, 6], [400, 9], [410, 3], [425, 6], [435, 10], [450, 7], [460, 2], [485, 3], [500, 3], [520, 1], [530, 4], [548, 5], [556, 7], [575, 7], [588, 12]];
        for (let i = 0; i < 159; i++) {
            const x = 5 + i * 3.68, h = at(size, x) * (.6 + .4 * Math.abs(Math.sin(i * 1.7)));
            rect(x - .8, 650 - h, 1.6, h, x > 560 || (x > 425 && x < 448) || Math.sin(i * 1.3) > -.1 && (x < 50 || x > 330) ? '#1f9a48' : Math.sin(i * .9) > .3 ? '#1f8a44' : '#9a1c34');
        }
        [[23.5, 637, '#1f9a48'], [53, 634, '#b81c34'], [60, 636, '#b81c34'], [127, 639, '#1f9a48'], [162, 640, '#b81c34'], [200, 639, '#b81c34'], [281, 577, '#d02448'], [369, 629, '#b81c34'], [384, 627, '#28a04c'], [399, 636, '#b81c34'], [436, 636, '#28a04c'], [483, 640, '#b81c34'], [527.5, 607, '#28a04c'], [546, 637, '#28a04c'], [553.5, 598, '#d8202c'], [564, 636, '#28a04c'],
        [38.5, 640, '#e8eef0'], [67.5, 643, '#e8eef0'], [207.5, 636, '#e8eef0'], [340, 645, '#e8eef0'], [376.5, 639, '#e8eef0'], [487, 648, '#e8eef0']].forEach(([x, y, c]) => rect(x - 1, y, c === '#e8eef0' ? 2.6 : 1.9, 650 - y, c));
        poly([[3, 648.5], [30, 646], [70, 643], [100, 644], [150, 647.5], [200, 645], [230, 643], [275, 646], [281, 641], [300, 643], [352, 644], [355, 648.5], [378, 647], [405, 643], [440, 641], [470, 645], [523, 648], [540, 644], [560, 641], [588, 639]], '#38b868', 1.2);

        // time axis
        ['17:20', '11:00', '12:40', '14:20', '16:00', '17:40', '11:20', '13:00', '14:40', '16:20', '10:00', '11:40', '13:20', '15:00', '16:40', '10:20']
            .forEach((t, i) => text((12 + i * 36.78).toFixed(1), 663, t, 23, 9.5, '#b8cbe0', 'font-weight="500"'));
        [[5, 24], [27, 200.5], [204, 377.5], [380.5, 554], [557, 1092]].forEach(([a, b]) => rect(a, 669, b - a, 11.5, '#2a3f56'));
        [['23/dez', 98.5], ['26/dez', 275.5], ['27/dez', 452], ['28/dez', 790.5]].forEach(([t, x]) => text(x, 678.5, t, 28, 9.5, '#a3b6ca'));
        rect(3, 681.5, 1089, 1.5, '#252b32');
        document.getElementById('chart').innerHTML = s;

        // ---------- drawing tools ----------
        s = '';
        rect(1251, 73, 27, 610, '#3b3b3b');
        rect(1256, 97, 18, 17, '#0d0d0d');
        s += `<path d="M1261 80v11l2.7-2.3 1.7 4 1.8-.8-1.7-3.9h3.5z" fill="#c4c4c4"/>
            <path d="M1260 103l2.500 7h5.500l2-4v-5h-1.5v-2h-1.7v-1h-1.600v1h-1.700v5z" fill="#e4e4e4"/>
            <path d="M1260 123.5h10M1265 118.5v10" stroke="#ccc" stroke-width="1.6"/>
            <path d="M1261 143l5-5 4 3-5 5h-3z" fill="none" stroke="#ccc" stroke-width="1.3"/><path d="M1263 141l4 3M1263 147h7" stroke="#ccc" stroke-width="1.3"/>
            <circle cx="1261" cy="165.5" r="4.7" fill="none" stroke="#ccc" stroke-width="1.4"/><path d="M1261 162.5v3h3M1259 159h4" stroke="#ccc" stroke-width="1.6" fill="none"/>
            <path d="M1255.5 181v-3h3M1264 178h3M1255.5 186v3h3M1267 186v3h-3" fill="none" stroke="#aaa"/><path d="M1257 188l2-4 7-7 2 2-7 7z" fill="#ccc"/>
            <rect x="1255.5" y="197" width="11" height="10" fill="#f2f2f2"/><text x="1261" y="205.5" font-size="9" font-weight="bold" text-anchor="middle" fill="#111">A</text>
            <path d="M1260 225v-4a4.5 4.5 0 0 1 9 0v4" fill="none" stroke="#b82c3c" stroke-width="3"/><path d="M1258.5 224h3M1267.5 224h3" stroke="#ddd" stroke-width="1.5"/>
            <path d="M1256 249l2-3 7-7M1256 249l4-1 6-7" fill="none" stroke="#2f8a90" stroke-width="1.4"/>`;
        [165, 183, 202, 244].forEach(y => s += `<path d="M1272 ${y - 1}h4l-2 2.5z" fill="#ccc"/>`);
        [154, 231, 254].forEach(y => line(1253, y, 1276, y, '#2c2c2c'));
        [[260, 272], [280, 291], [297, 309]].forEach(([a, b]) => line(1259, a, 1271, b, '#6c9c98', 1.2));
        s += '<g fill="#c4d0d0"><circle cx="1259" cy="280" r="1.3"/><circle cx="1271" cy="291" r="1.3"/><circle cx="1259" cy="297" r="1.2"/></g>';
        line(1259, 318, 1267, 327, '#4f8884'); line(1262, 315, 1271, 324, '#4f8884');
        [339.5, 354.5, 359, 363.5].forEach(y => line(1258, y, 1272, y, '#5c9490', 1.3));
        s += '<path d="M1258 374h14M1259 372v4M1271 372v4" stroke="#a8c8c4" stroke-width="1.2"/><rect x="1262" y="517" width="14" height="90" rx="3" fill="#b3384e"/><path d="M1269 455l3-3M1269 482h2v4M1269 500h3M1269 627h2v5M1269 655l3 2M1269 675h3" stroke="#8a9a9a" fill="none"/>';
        document.getElementById('tools').innerHTML = s;
    </script>
</body>

</html>
